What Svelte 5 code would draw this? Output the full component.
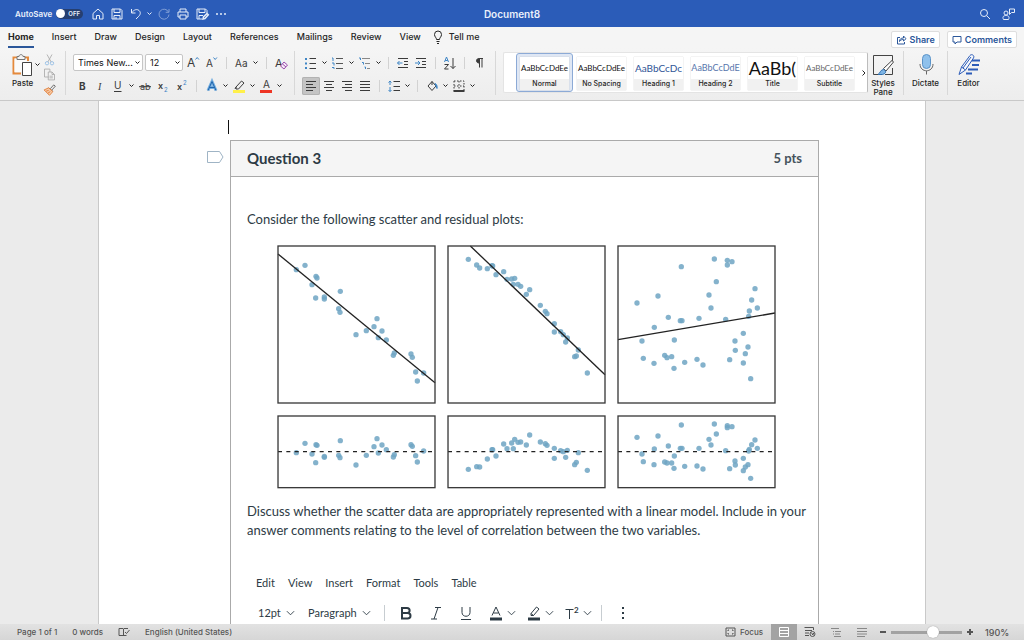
<script>
  const tabs = ['Home', 'Insert', 'Draw', 'Design', 'Layout', 'References', 'Mailings', 'Review', 'View'];
  const styles = [
    { name: 'Normal', sample: 'AaBbCcDdEe', kind: 'plain', on: true },
    { name: 'No Spacing', sample: 'AaBbCcDdEe', kind: 'plain' },
    { name: 'Heading 1', sample: 'AaBbCcDc', kind: 'h1' },
    { name: 'Heading 2', sample: 'AaBbCcDdE', kind: 'h2' },
    { name: 'Title', sample: 'AaBb(', kind: 'title' },
    { name: 'Subtitle', sample: 'AaBbCcDdEe', kind: 'sub' }
  ];
  const menus = ['Edit', 'View', 'Insert', 'Format', 'Tools', 'Table'];

  // Each point: x, y in the scatter plot, y in the residual plot.
  const plots = [
    {
      name: 'Strong linear trend',
      line: [25, 41, 496, 427],
      points: [[80,88,637],[106,75,609],[139,108,613],[142,113,615],[127,133,641],[138,173,667],[164,170,648],[164,176,651],[212,153,601],[207,205,645],[211,216,652],[259,283,674],[290,271,645],[322,235,595],[313,259,619],[337,272,614],[326,292,638],[350,299,628],[374,338,643],[371,345,650],[424,341,613],[428,351,618],[438,395,646],[462,398,632],[443,422,665]]
    },
    {
      name: 'Curved trend',
      line: [92, 17, 496, 403],
      points: [[86,57,687],[111,74,679],[120,83,680],[143,85,656],[157,76,628],[159,77,628],[169,103,647],[192,94,611],[202,117,625],[216,116,608],[225,114,597],[221,132,625],[235,132,606],[243,138,605],[260,162,614],[270,148,584],[302,195,605],[317,213,610],[322,220,615],[344,250,624],[344,275,654],[363,274,631],[371,283,634],[383,293,630],[378,305,651],[416,329,637],[405,349,673],[410,347,666],[443,398,690]]
    },
    {
      name: 'Weak trend',
      line: [25, 298, 496, 218],
      points: [[82,188,591],[145,167,587],[215,79,554],[314,56,551],[353,60,556],[353,74,562],[367,64,559],[320,124,581],[298,164,597],[304,203,614],[436,145,599],[426,179,613],[443,203,624],[419,212,627],[417,228,632],[348,237,631],[176,231,617],[212,241,624],[217,241,624],[268,234,624],[134,261,626],[97,302,641],[194,299,647],[101,354,664],[133,369,673],[165,345,665],[172,352,668],[186,349,668],[193,384,684],[225,366,678],[262,357,677],[280,374,686],[360,358,685],[376,302,662],[377,330,674],[401,279,654],[415,320,673],[407,340,680],[401,368,691],[423,415,714]]
    }
  ];

  const icons = {
    home: '<path d="M4 8.500 9 4l5 4.500V14h-3.500v-3.500h-3V14H4z"/>',
    save: '<path d="M4 4h8.500L14 5.500V14H4zM6 4v3.500h6V4M6 14v-3.500h6V14M8 14v-2"/>',
    undo: '<path d="M4.500 4v4h4M4.700 7.800C7 4.500 10 3.800 12 5.500c2 1.800 1.500 4-.3 5.800L9 14"/>',
    redo: '<path d="M13.500 7A5 5 0 1 0 14 9.500M14 4v3.300h-3.300"/>',
    print: '<path d="M6 7V4h6v3M6 12H4V7h10v5h-2M6 10h6v4H6z"/>',
    saveEdit: '<path d="M4 4h8.500L14 5.500V8M9 14H4V4M6 4v3.500h6V4M6 14v-3.500h4"/><path stroke-width="1.500" d="m10 14 .5-2 3.500-3.500 1.300 1.300L12 13.500z"/>',
    dots: '<g fill="currentColor" stroke="none"><circle cx="5" cy="9" r="1"/><circle cx="9" cy="9" r="1"/><circle cx="13" cy="9" r="1"/></g>',
    search: '<circle cx="8" cy="8" r="3.500"/><path d="m10.700 10.700 3.300 3.300"/>',
    people: '<circle cx="6" cy="8" r="2"/><path d="M3.500 14.500c-1.500-3 .5-4 2.500-4s4 1 2.500 4zM9.500 4h5v3.500h-3L9.500 9.500z"/>',
    cut: '<g stroke="#a8a8a8"><path d="m6 3 5 9M12 3l-5 9"/></g><g stroke="#8fbbe3"><circle cx="6" cy="13.500" r="2"/><circle cx="12" cy="13.500" r="2"/></g>',
    copy: '<path stroke="#a8a8a8" d="M8 12H3V2.500h6.500V6M7.500 6H12l3 3v6.500H7.500zM12 6v3h3M9 11h4M9 13h4"/>',
    brush: '<path stroke="#555" d="m10 8 4-4.500 2 1.500-4 4.500M8 7l5 4"/><path d="m2.500 9.500 5.500-2.500 5 4.500L9 16z" fill="#f6c9a5" stroke="#e0762d"/><path stroke="#e0762d" d="m5 11 3-1M7 13.500l3-2"/>',
    grow: '<text x="3" y="13" font-size="12">A</text><path stroke="#3f86c6" d="m11.500 5.500 1.700-2 1.700 2"/>',
    shrink: '<text x="4" y="13" font-size="10">A</text><path stroke="#3f86c6" d="m11.500 3.500 1.700 2 1.700-2"/>',
    caseIcon: '<text x="2" y="13" font-size="10">Aa</text>',
    clear: '<text x="2" y="13" font-size="11">A</text><path stroke="#9b4fae" fill="#f6ecf8" d="m7.500 12 3.500-4 3.500 3-3.500 4zM9.500 10l3.500 3"/>',
    bold: '<text x="6" y="13" font-size="10" font-weight="700">B</text>',
    italic: '<text x="7" y="13" font-size="10" font-style="italic" font-family="Liberation Serif">I</text>',
    underline: '<text x="5" y="12" font-size="10">U</text><path d="M5 14.500h7.500"/>',
    strike: '<text x="4" y="13" font-size="9">ab</text><path d="M3 9.700h12"/>',
    sub: '<text x="4" y="12" font-size="9" font-weight="600">x</text><text x="10" y="15" font-size="6" fill="#3f86c6">2</text>',
    sup: '<text x="5" y="13" font-size="9" font-weight="600">x</text><text x="11" y="8" font-size="6" fill="#3f86c6">2</text>',
    effects: '<path stroke="#74aee0" stroke-width="3" d="M5 13.500 9 4.500l4 9M6.500 10.500h5"/><path stroke="#1f65ad" d="M5 13.500 9 4.500l4 9M6.500 10.500h5"/>',
    highlight: '<path d="m6 10 5.500-6L14 6l-5.500 6H6zM5 12l1-2"/><path stroke="#fff04a" stroke-width="3" d="M3 14.500h12"/>',
    color: '<text x="6" y="11" font-size="10">A</text><path stroke="#ee3524" stroke-width="3" d="M3 14.500h12"/>',
    bullets: '<path stroke="#3f86c6" stroke-width="2" d="M3 5h2M3 9.500h2M3 14h2"/><path d="M7.500 4.500H14M7.500 9.500H14M7.500 14.500H14"/>',
    numbers: '<path stroke="#3f86c6" d="M3 4h1v3M3 9h2v2.500M3 13.500h2v1.500"/><path stroke="#555" d="M7 4.500h7M7 9.500h7M7 14.500h7"/>',
    levels: '<path stroke="#3f86c6" d="M3 4h1.500v2M6 8.500h1.500v2M8.500 13h1v2"/><path stroke="#888" d="M6 4.500h8M9 9.500h5M11 14.500h3"/>',
    outdent: '<path d="M4 4.500h10M10 7.500h4M10 10.500h4M4 13.500h10"/><path stroke="#3f86c6" d="M8.500 9h-5M5.500 7l-2 2 2 2"/>',
    indent: '<path d="M4 4.500h10M10 7.500h4M10 10.500h4M4 13.500h10"/><path stroke="#3f86c6" d="M3 9h5M6 7l2 2-2 2"/>',
    sort: '<path stroke="#3f86c6" d="M3.500 8 5.500 3l2 5M4.200 6.500h2.600"/><path d="M3.500 10.500h4l-4 4.500h4"/><path d="M12 4v10.500M9.500 12l2.500 2.500 2.500-2.500"/>',
    para: '<path d="M9.500 13.500v-9H13M12 4.500v9"/><path fill="currentColor" d="M9.500 4.500c-4-.5-4 5 0 4.500z"/>',
    left: '<path d="M4 4.500h10M4 7.500h7M4 10.500h10M4 13.500h7"/>',
    center: '<path d="M4 4.500h10M6 7.500h6M4 10.500h10M6 13.500h6"/>',
    right: '<path d="M4 4.500h10M7 7.500h7M4 10.500h10M7 13.500h7"/>',
    justify: '<path d="M4 4.500h10M4 7.500h10M4 10.500h10M4 13.500h10"/>',
    spacing: '<path stroke="#3f86c6" d="M5 4v4M3.500 5.500 5 4l1.500 1.500M5 10v4.500M3.500 13 5 14.500 6.500 13"/><path d="M8.500 4.500H15M8.500 9.500H15M8.500 13.500H15"/>',
    fill: '<path d="m5 9 4-4.500 4 4.500-4 4.500zM9 4.500V8"/><path fill="#3f86c6" stroke="#3f86c6" d="M12 6.500c1.500.5 2.500 2.500 2 5z"/>',
    borders: '<path stroke-dasharray="1.500 1.500" d="M4 4h10v9.500M4 4v9.500M9 4v10M4 9h10"/><path stroke-width="2" d="M3.500 14h11"/>'
  };
</script>

{#snippet icon(name)}
  <svg class="icon" viewBox="0 0 18 18" aria-hidden="true">{@html icons[name]}</svg>
{/snippet}

{#snippet chevron()}
  <svg class="chev" viewBox="0 0 9 9" aria-hidden="true"><path d="M2.500 3.500 4.500 5.500 6.500 3.500" /></svg>
{/snippet}

{#snippet tool(name, label, menu = false, on = false)}
  <button class="tool" class:on aria-label={label}>{@render icon(name)}{#if menu}{@render chevron()}{/if}</button>
{/snippet}

<div class="app">
  <header class="titlebar">
    <div class="quick">
      <label class="autosave">AutoSave
        <span class="switch"><input type="checkbox" /><span>OFF</span></span>
      </label>
      {@render tool('home', 'Home')}
      {@render tool('save', 'Save')}
      {@render tool('undo', 'Undo', true)}
      <span class="dim">{@render tool('redo', 'Redo')}</span>
      {@render tool('print', 'Print')}
      {@render tool('saveEdit', 'Save as')}
      {@render tool('dots', 'More')}
    </div>
    <h1>Document8</h1>
    <div class="account">
      {@render tool('search', 'Search')}
      {@render tool('people', 'Collaborate')}
    </div>
  </header>

  <nav class="tabs">
    {#each tabs as tab, i}
      <button class:active={i === 0}>{tab}</button>
    {/each}
    <button class="tell">
      <svg width="10" height="14" viewBox="0 0 10 14" aria-hidden="true"><path d="M3.500 9.500C3.500 7.500 1.500 7 1.500 4.500a3.500 3.500 0 0 1 7 0c0 2.500-2 3-2 5zM3.500 11.500h3M4 13.500h2" /></svg>
      Tell me
    </button>
    <div class="actions">
      <button><svg width="11" height="10" viewBox="0 0 11 10" aria-hidden="true"><path d="M4 2.500H1.500v6.500h7V7M3.500 6.500c0-2.500 1.500-3.500 4-3.500V1L10 3.700 7.500 6V4.500c-2 0-3 .5-4 2z" /></svg>Share</button>
      <button><svg width="10" height="10" viewBox="0 0 10 10" aria-hidden="true"><path d="M1 1.500h8v5.500H5L3 9V7H1z" /></svg>Comments</button>
    </div>
  </nav>

  <section class="ribbon" aria-label="Home tools">
    <div class="group clip">
      <button class="paste">
        <span class="pic">
          <svg width="20" height="22" viewBox="0 0 20 22" aria-hidden="true">
            <path d="M9 19.500H1.500v-16h4M12 3.500h4V7" stroke="#e58a3c" stroke-width="2" />
            <path d="M2.500 4.500h12V18h-12z" fill="#fbfbfb" stroke="none" />
            <path d="M5 5.500v-3h2C7 0 11 0 11 2.500h2v3z" fill="#f4f4f4" stroke="#777" />
            <path d="M10.500 8.500h9v13h-9z" fill="#fff" stroke="#444" />
          </svg>
        </span>
        Paste
      </button>
      {@render chevron()}
      <div class="stack">
        {@render tool('cut', 'Cut')}
        {@render tool('copy', 'Copy')}
        {@render tool('brush', 'Format painter')}
      </div>
    </div>

    <div class="group font">
      <div class="row">
        <label class="pick name"><select aria-label="Font"><option>Times New...</option></select>{@render chevron()}</label>
        <label class="pick size"><select aria-label="Font size"><option>12</option></select>{@render chevron()}</label>
        {@render tool('grow', 'Grow font')}
        {@render tool('shrink', 'Shrink font')}
        <i class="rule"></i>
        {@render tool('caseIcon', 'Change case', true)}
        <i class="rule"></i>
        {@render tool('clear', 'Clear formatting')}
      </div>
      <div class="row">
        {@render tool('bold', 'Bold')}
        {@render tool('italic', 'Italic')}
        {@render tool('underline', 'Underline', true)}
        {@render tool('strike', 'Strikethrough')}
        {@render tool('sub', 'Subscript')}
        {@render tool('sup', 'Superscript')}
        <i class="rule"></i>
        {@render tool('effects', 'Text effects', true)}
        {@render tool('highlight', 'Highlight', true)}
        {@render tool('color', 'Font color', true)}
      </div>
    </div>

    <div class="group paragraph">
      <div class="row">
        {@render tool('bullets', 'Bullets', true)}
        {@render tool('numbers', 'Numbering', true)}
        {@render tool('levels', 'Multilevel list', true)}
        <i class="rule"></i>
        {@render tool('outdent', 'Decrease indent')}
        {@render tool('indent', 'Increase indent')}
        <i class="rule"></i>
        {@render tool('sort', 'Sort')}
        <i class="rule"></i>
        {@render tool('para', 'Show marks')}
      </div>
      <div class="row">
        {@render tool('left', 'Align left', false, true)}
        {@render tool('center', 'Center')}
        {@render tool('right', 'Align right')}
        {@render tool('justify', 'Justify')}
        <i class="rule"></i>
        {@render tool('spacing', 'Line spacing', true)}
        <i class="rule"></i>
        {@render tool('fill', 'Shading', true)}
        {@render tool('borders', 'Borders', true)}
      </div>
    </div>

    <div class="gallery">
      {#each styles as s}
        <button class="style" class:chosen={s.on}>
          <span class="card"><span class="sample {s.kind}">{s.sample}</span><span class="label">{s.name}</span></span>
        </button>
      {/each}
      <button class="more" aria-label="More styles"><svg width="6" height="8" viewBox="0 0 6 8" aria-hidden="true"><path d="M1.500 1.500 4 4 1.500 6.500" /></svg></button>
    </div>

    <button class="big pane">
      <svg width="24" height="24" viewBox="0 0 24 24" aria-hidden="true">
        <path d="M21.500 9V2.500h-19v19h5M14 21.500h7.500V15" stroke="#444" />
        <path d="m12.500 15.500 8.500-8 1.500 1.500-7.500 9z" fill="#fff" stroke="#444" />
        <path d="M7 21.500c2-1 2.500-5 5.500-5 3 1 3 4-1 5z" fill="#7db4e4" stroke="#2f6fae" />
      </svg>
      <span>Styles<br />Pane</span>
    </button>
    <button class="big">
      <svg width="24" height="24" viewBox="0 0 24 24" aria-hidden="true">
        <rect x="8.500" y="1.500" width="8" height="14" rx="4" fill="#8fc1ec" stroke="#5b93c8" />
        <path d="M6 11c0 9 13 9 13 0M12.500 18v3.500" stroke="#666" />
      </svg>
      <span>Dictate</span>
    </button>
    <button class="big">
      <svg width="24" height="24" viewBox="0 0 24 24" aria-hidden="true">
        <path d="M12 7.500h11M15 12h7M11 16.500h10M9 20.500h6" stroke="#2d5cb8" stroke-width="2" />
        <path d="M2 21.500 4.500 14 13 2.500c1.500-2 5 0 3.500 2.500L8.500 17z" fill="#f4f7fc" stroke="#2d5cb8" />
        <path d="m4.500 14 4 3M6 15 14 4" stroke="#2d5cb8" />
      </svg>
      <span>Editor</span>
    </button>
  </section>

  <main class="desk">
    <article class="page">
      <span class="caret"></span>
      <div class="question">
        <svg class="flag" width="17" height="14" viewBox="0 0 17 14" aria-hidden="true"><path d="M.5 1.500h12L16 7l-3.500 5.500H.5z" fill="none" stroke="#9fb4c5" /></svg>
        <section class="box">
          <header><h2>Question 3</h2><span>5 pts</span></header>
          <div class="body">
            <p>Consider the following scatter and residual plots:</p>
            <div class="plots">
              {#each plots as plot}
                <figure>
                  <svg viewBox="22 14 477 477" role="img" aria-label="{plot.name}, scatter">
                    {#each plot.points as [x, y]}<circle cx={x} cy={y} r="8" />{/each}
                    <line x1={plot.line[0]} y1={plot.line[1]} x2={plot.line[2]} y2={plot.line[3]} />
                    <rect x="25" y="17" width="471" height="471" />
                  </svg>
                  <svg viewBox="22 524 477 221" role="img" aria-label="{plot.name}, residuals">
                    {#each plot.points as [x, , r]}<circle cx={x} cy={r} r="8" />{/each}
                    <line x1="25" y1="634" x2="496" y2="634" stroke-dasharray="12 13" />
                    <rect x="25" y="527" width="471" height="215" />
                  </svg>
                </figure>
              {/each}
            </div>
            <p>Discuss whether the scatter data are appropriately represented with a linear model. Include in your answer comments relating to the level of correlation between the two variables.</p>

            <div class="menus">{#each menus as m}<button>{m}</button>{/each}</div>
            <div class="editbar">
              <label class="drop"><select aria-label="Text size"><option>12pt</option></select><svg class="wide" viewBox="0 0 10 8" aria-hidden="true"><path d="m1 2 4 4 4-4" /></svg></label>
              <label class="drop"><select aria-label="Block"><option>Paragraph</option></select><svg class="wide" viewBox="0 0 10 8" aria-hidden="true"><path d="m1 2 4 4 4-4" /></svg></label>
              <div class="marks">
                <button aria-label="Bold"><svg width="16" height="16" viewBox="0 0 16 16"><path stroke-width="2" d="M4 3h5c3.500 0 3.500 5 0 5H4zM4 8h5.500c4 0 4 5.500 0 5.500H4z" /></svg></button>
                <button aria-label="Italic"><svg width="16" height="16" viewBox="0 0 16 16"><path d="M7 2.500h6M3 14h6M10 2.500 6 14" /></svg></button>
                <button aria-label="Underline"><svg width="16" height="16" viewBox="0 0 16 16"><path d="M4 2v5.500c0 5 8 5 8 0V2M3 14.500h10" /></svg></button>
              </div>
              <div class="marks tight">
                <button aria-label="Text color"><svg width="16" height="16" viewBox="0 0 16 16"><path d="M4 10.500 8 2l4 8.500M5.500 8h5" /><path stroke-width="3" d="M2 14h12" /></svg><svg class="wide" viewBox="0 0 10 8"><path d="m1 2 4 4 4-4" /></svg></button>
                <button aria-label="Highlight color"><svg width="16" height="16" viewBox="0 0 16 16"><path d="m5 8.500 5.500-6.500 2.500 2-5.500 6.500H5zM5 8.500l2.500 2" /><path stroke-width="3" d="M2 14h12" /></svg><svg class="wide" viewBox="0 0 10 8"><path d="m1 2 4 4 4-4" /></svg></button>
                <button aria-label="Superscript"><svg width="16" height="16" viewBox="0 0 16 16"><path d="M1.500 4.500h8M5.500 4.500V14" /><text x="10" y="8" font-size="8" font-weight="700">2</text></svg><svg class="wide" viewBox="0 0 10 8"><path d="m1 2 4 4 4-4" /></svg></button>
              </div>
              <button aria-label="More tools"><svg width="16" height="16" viewBox="0 0 16 16"><path stroke-width="2" d="M8 2v2M8 7v2M8 12v2" /></svg></button>
            </div>
          </div>
        </section>
      </div>
    </article>
  </main>

  <footer class="status">
    <span>Page 1 of 1</span>
    <span>0 words</span>
    <svg width="12" height="10" viewBox="0 0 12 10" aria-hidden="true"><path d="M8.500 8.500H6L5.500 9 5 8.500H1v-7h4l.5.500.5-.5h4M5.500 2v7M7 5l1.500 1.500L11.500 3" /></svg>
    <span>English (United States)</span>
    <div class="views">
      <button class="focus"><svg width="11" height="10" viewBox="0 0 11 10" aria-hidden="true"><path d="M1 1h9v8H1z" /><path d="M3 4V3h1M7 3h1v1M8 6v1H7M4 7H3V6" /></svg>Focus</button>
      <button class="view cur" aria-label="Print layout"><svg width="12" height="12" viewBox="0 0 12 12"><path d="M1.500 1.500h9v9h-9zM1.500 4.500h9M1.500 7.500h9" /></svg></button>
      <button class="view" aria-label="Web layout"><svg width="12" height="12" viewBox="0 0 12 12"><path d="M9.500 4V1.500h-9M1 4.500h7M1 7h4M1 9.500h4" /><circle cx="8.500" cy="8" r="2.500" /><path d="m7 6.500 3 3M8 9l2-2" /></svg></button>
      <button class="view pale" aria-label="Outline"><svg width="12" height="12" viewBox="0 0 12 12"><path d="M1 2.500h8M3 5.500h1M5 5.500h6M3 8h1M5 8h5M4 10.500h7" /></svg></button>
      <button class="view pale" aria-label="Draft"><svg width="12" height="12" viewBox="0 0 12 12"><path d="M1 2.500h10M1 5.500h10M1 8h10M1 10.500h8" /></svg></button>
      <button class="step" aria-label="Zoom out"><svg width="8" height="8" viewBox="0 0 8 8"><path stroke-width="2" d="M1 4h6" /></svg></button>
      <input type="range" aria-label="Zoom" min="0" max="100" value="61" />
      <button class="step" aria-label="Zoom in"><svg width="8" height="8" viewBox="0 0 8 8"><path stroke-width="2" d="M1 4h6M4 1v6" /></svg></button>
      <span class="percent">190%</span>
    </div>
  </footer>
</div>

<style>
  :global(body) { margin: 0; }
  .app { display: flex; flex-direction: column; height: 100vh; overflow: hidden; background: #ebebeb; color: #262626; font-family: Inter, "Liberation Sans", sans-serif; font-size: 9px; }
  .app * { box-sizing: border-box; }
  button, select { border: 0; padding: 0; margin: 0; background: none; color: inherit; font: inherit; }
  select { appearance: none; outline: none; }
  svg { fill: none; stroke: currentColor; flex: none; display: block; }
  svg :global(text) { fill: currentColor; stroke: none; }
  .icon { width: 18px; height: 18px; color: #3b3b3b; }
  .icon :global(text[fill]) { fill: #3f86c6; }
  .chev { width: 9px; height: 9px; color: #222; }
  .tool { display: flex; align-items: center; height: 18px; }
  .tool.on { background: #c4c4c4; border-radius: 2px; box-shadow: inset 0 0 0 1px #b2b2b2; }

  .titlebar { display: grid; grid-template-columns: 1fr auto 1fr; align-items: center; height: 27px; flex: none; background: #2b5cb8; color: #eaf0fb; }
  .titlebar h1 { margin: 0; font-size: 10px; font-weight: 600; line-height: 14px; }
  .titlebar .icon, .titlebar .chev { color: #e6edf9; }
  .quick { display: flex; align-items: center; gap: 1px; padding-left: 15px; }
  .dim { opacity: 0.45; }
  .autosave { display: flex; align-items: center; gap: 4px; margin-right: 5px; font-size: 8px; font-weight: 600; }
  .switch { display: flex; align-items: center; gap: 3px; width: 27px; height: 10px; border-radius: 5px; background: #263f70; font-size: 6px; }
  .switch input { appearance: none; width: 9px; height: 9px; margin: 0; border-radius: 50%; background: #fff; }
  .account { display: flex; justify-content: flex-end; gap: 6px; padding-right: 6px; }

  .tabs { display: flex; align-items: center; gap: 18px; height: 21px; flex: none; padding: 0 7px 0 8px; background: #f5f5f5; font-weight: 500; }
  .tabs > button { height: 20px; line-height: 18px; border-bottom: 2px solid transparent; white-space: nowrap; }
  .tabs .active { border-color: #2b579a; font-weight: 700; }
  .tabs .tell { display: flex; align-items: center; gap: 6px; margin-left: -6px; }
  .actions { display: flex; gap: 7px; margin-left: auto; align-self: flex-end; }
  .actions button { display: flex; align-items: center; gap: 3px; height: 17px; padding: 0 4px; background: #fff; border: 1px solid #dedede; border-radius: 2px; color: #2b579a; font-weight: 600; }

  .ribbon { display: flex; align-items: flex-start; height: 53px; flex: none; padding-top: 3px; background: linear-gradient(#f5f5f5, #ededed); border-bottom: 1px solid #c8c8c8; }
  .group { height: 44px; border-right: 1px solid #d8d8d8; flex: none; }
  .clip { display: flex; align-items: flex-start; width: 66px; padding-left: 12px; }
  .clip > .chev { margin: 9px 0 0 -3px; }
  .paste { width: 24px; line-height: 11px; font-size: 8px; font-weight: 500; text-align: left; white-space: nowrap; }
  .pic { display: block; padding: 3px 0 2px; }
  .stack { display: flex; flex-direction: column; padding-top: 1px; }
  .stack .tool { height: 15px; }
  .stack .icon { width: 15px; height: 15px; }
  .font { width: 229px; padding-left: 7px; }
  .paragraph { width: 201px; padding-left: 7px; }
  .row { display: flex; align-items: center; height: 23px; }
  .rule { width: 13px; height: 12px; background: linear-gradient(#d2d2d2, #d2d2d2) center / 1px 100% no-repeat; }
  .paragraph .rule { width: 11px; }
  .pick { display: flex; align-items: center; height: 17px; padding: 0 0 0 4px; background: #fff; border: 1px solid #c6c6c6; border-radius: 2px; color: #111; }
  .pick select { flex: 1; min-width: 0; }
  .name { width: 70px; margin-right: 2px; }
  .size { width: 38px; margin-right: 1px; }

  .gallery { display: flex; align-items: center; flex: 1; min-width: 0; height: 41px; margin: 1px 0 0 7px; padding-left: 12px; background: #fff; border: 1px solid #e4e4e4; border-right-color: #bcbcbc; border-radius: 2px; overflow: hidden; }
  .style { width: 57px; height: 39px; padding: 3px; flex: none; border: 1px solid transparent; border-radius: 3px; }
  .style.chosen { background: #dfe7f4; border-color: #8caad6; }
  .card { display: flex; flex-direction: column; height: 33px; width: 49px; background: #fff; box-shadow: 0 0 1px #bbb; }
  .sample { display: flex; align-items: center; justify-content: center; height: 22px; font-family: Lato, sans-serif; white-space: nowrap; color: #111; font-size: 8px; line-height: 20px; }
  .sample.h1 { color: #2f5496; font-size: 10px; }
  .sample.h2 { color: #5876ac; font-size: 9px; }
  .sample.title { font-size: 18px; }
  .sample.sub { color: #666; }
  .label { height: 11px; background: #f1f1f1; font-size: 7px; line-height: 10px; font-weight: 500; text-align: center; }
  .more { margin-left: auto; }
  .big { display: flex; flex-direction: column; align-items: center; width: 44px; height: 44px; flex: none; border-right: 1px solid #d8d8d8; font-size: 8px; line-height: 9px; font-weight: 500; text-align: center; }
  .big:last-child { width: 41px; border: 0; margin-right: 35px; }
  .big.pane { width: 36px; padding-right: 5px; }
  .big svg { margin: 2px 0; }

  .desk { flex: 1; min-height: 0; overflow: hidden; display: flex; justify-content: center; }
  .page { width: 828px; padding: 19px 106px 0 108px; background: #fff; border: solid #c9c9c9; border-width: 0 1px; }
  .caret { display: block; width: 1px; height: 14px; margin: 0 0 6px 21px; background: #111; }
  .question { display: flex; align-items: flex-start; gap: 6px; }
  .flag { margin-top: 10px; }
  .box { flex: 1; border: 1px solid #aaa; font-family: Lato, sans-serif; font-size: 13px; line-height: 19px; color: #2d3b45; }
  .box header { display: flex; justify-content: space-between; align-items: center; height: 36px; padding: 0 16px; background: #f5f5f5; border-bottom: 1px solid #aaa; font-weight: 700; color: #45525c; }
  .box h2 { margin: 0; font-size: 15px; color: #2d3b45; }
  .body { padding: 33px 8px 20px 16px; }
  .body p { margin: 0; }
  .plots { display: grid; grid-template-columns: repeat(3, 159px); gap: 11px; margin: 16px 0 13px 30px; }
  figure { display: flex; flex-direction: column; gap: 11px; margin: 0; }
  figure svg { width: 100%; }
  figure circle { fill: #6ea4c3; fill-opacity: 0.85; stroke: none; }
  figure line { stroke: #222; stroke-width: 4; }
  figure rect { stroke: #3a3a3a; stroke-width: 4; }
  .menus { display: flex; gap: 13px; margin-top: 33px; padding-left: 9px; font-size: 11px; }
  .editbar { display: flex; align-items: center; height: 20px; margin-top: 11px; padding-left: 11px; font-size: 11px; }
  .drop { display: flex; align-items: center; gap: 5px; margin-right: 13px; }
  .wide { width: 9px; height: 8px; }
  .marks { display: flex; gap: 14px; padding: 0 14px 0 13px; border-left: 1px solid #c7cdd1; }
  .marks button { display: flex; align-items: center; gap: 3px; }
  .marks.tight { gap: 10px; padding: 0 9px 0 0; border-left: 0; border-right: 1px solid #c7cdd1; margin-right: 13px; }

  .status { display: flex; align-items: center; height: 16px; flex: none; padding-left: 17px; gap: 15px; background: linear-gradient(#e2e2e2, #d6d6d6); color: #555; font-size: 8px; font-weight: 500; }
  .views { display: flex; align-items: center; margin-left: auto; height: 100%; }
  .focus { display: flex; align-items: center; gap: 4px; margin-right: 8px; }
  .view { display: flex; align-items: center; justify-content: center; width: 26px; height: 16px; }
  .cur { background: #a3a3a3; color: #fff; }
  .pale { color: #888; }
  .step { margin: 0 4px; }
  input[type='range'] { appearance: none; width: 71px; height: 12px; margin: 0; background: linear-gradient(#a2a2a2, #a2a2a2) center / 100% 3px no-repeat; }
  input[type='range']::-webkit-slider-thumb { appearance: none; width: 12px; height: 12px; border-radius: 50%; background: #fff; box-shadow: 0 0 1px #777; }
  .percent { width: 46px; padding-left: 7px; font-size: 9px; }
</style>
